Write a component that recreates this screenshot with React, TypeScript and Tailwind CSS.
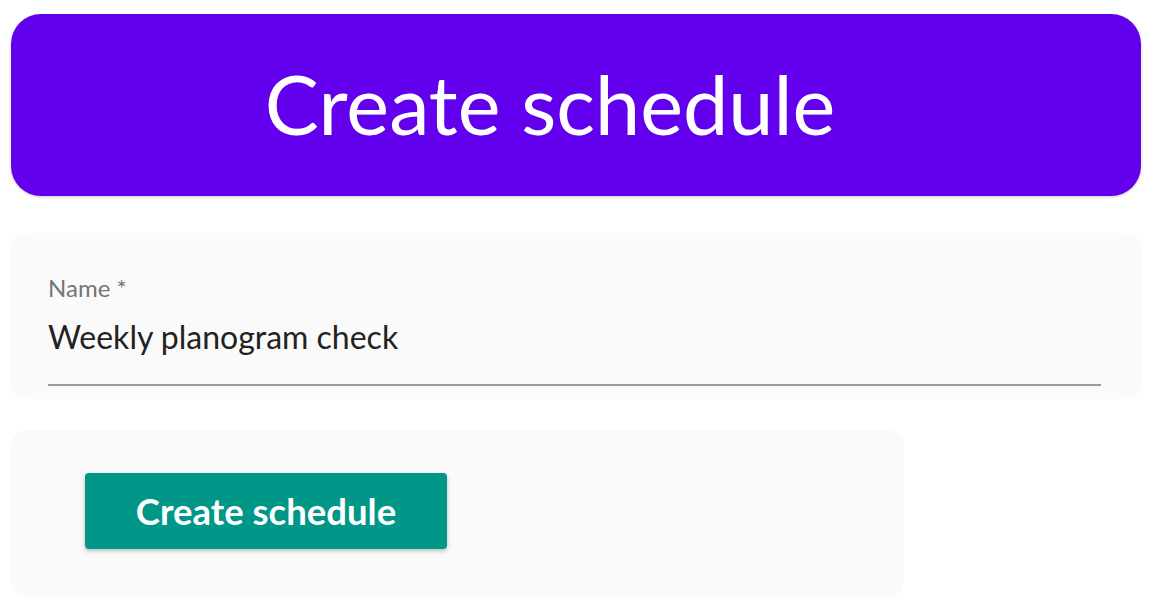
import React from "react";

export default function App() {
  const font = { fontFamily: '"Lato", "Noto Sans", sans-serif' };
  return (
    <div className="min-h-[610px] bg-white pl-[11px] pr-[10px] pt-[14px]" style={font}>
      <div className="flex h-[182px] items-center justify-center rounded-[30px] bg-[#6200ee] pb-[3px] pr-[52px] shadow-[0_1px_3px_rgba(0,0,0,0.2)]">
        <h1 className="text-[81px] font-normal leading-none text-white">Create schedule</h1>
      </div>
      <div className="mt-[37px] h-[166px] rounded-[16px] bg-[#fafafa] pl-[37px] pr-[40px] pt-[41px]">
        <div className="text-[24px] leading-[28px] text-[#757575]">Name *</div>
        <div className="mt-[16px] border-b-2 border-[#9a9a9a] pb-[28px] text-[32px] leading-[38px] text-[#222]">
          Weekly planogram check
        </div>
      </div>
      <div className="mt-[31px] h-[167px] w-[893px] rounded-[16px] bg-[#fafafa] pl-[74px] pt-[43px]">
        <button className="flex h-[76px] w-[362px] items-center justify-center rounded-[4px] bg-[#009688] text-[36.5px] font-bold text-white shadow-[0_2px_4px_rgba(0,0,0,0.25)]">
          Create schedule
        </button>
      </div>
    </div>
  );
}
